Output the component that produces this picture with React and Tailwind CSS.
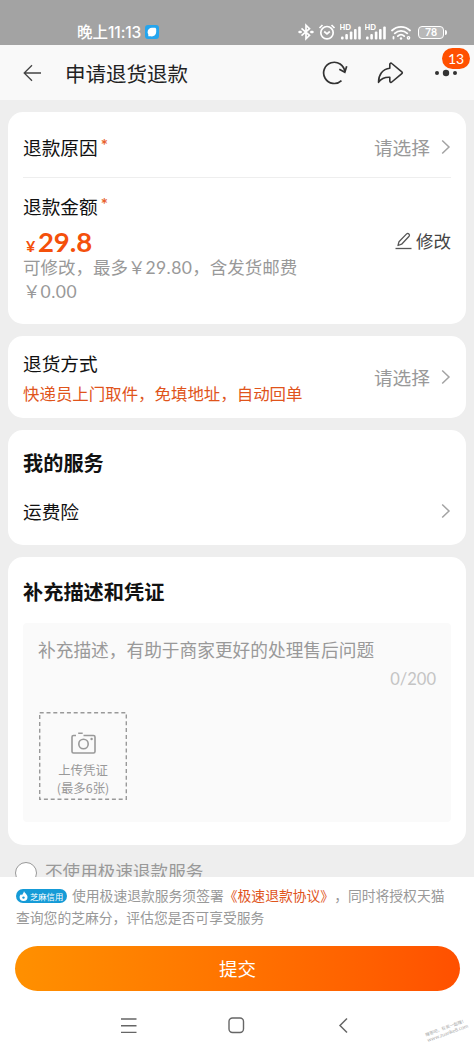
const Chevron = () => (
  <svg width="10" height="16" viewBox="0 0 10 16" fill="none" stroke="#a3a3a3" strokeWidth="1.5">
    <path d="M1.2 1.5 8 8l-6.8 6.5" />
  </svg>
)

const Signal = () => (
  <div className="flex h-[17px] w-[22px]">
    <svg width="22" height="17" viewBox="0 0 22 17" fill="#fff">
      <text x="-0.5" y="6" fontSize="7.5" fontWeight="900" fontFamily="Lato, sans-serif">HD</text>
      <rect x="1" y="12.5" width="2.6" height="3" rx="1" />
      <rect x="5.3" y="10" width="2.6" height="5.5" rx="1" />
      <rect x="9.8" y="7.5" width="2.6" height="8" rx="1" />
      <rect x="14" y="5" width="2.6" height="10.5" rx="1" />
      <rect x="18.2" y="2.5" width="2.6" height="13" rx="1" />
    </svg>
  </div>
)

const StatusBar = () => (
  <div className="flex h-[45px] items-start justify-between bg-[#a3a3a3] pl-[77px] pr-[27px] pt-[23px] text-white">
    <div className="flex h-[18px] items-center gap-[4px]">
      <span className="text-[15.5px] leading-[18px] font-medium">晚上<span className="font-['Inter'] tracking-[-0.1px]">11:13</span></span>
      <svg width="14" height="14" viewBox="0 0 14 14">
        <rect width="14" height="14" rx="3" fill="#25a5ee" />
        <path d="M2.6 7.2C2.6 4.500 4.600 2.800 7 2.800h2.600c1 0 1.600.6 1.600 1.500V7c0 2.600-2 4.400-4.300 4.400-.9 0-1.400-.2-2-.2-.8 0-1.300.2-1.500 0-.3-.3 0-.9-.1-1.600-.1-.8-.7-1.300-.7-2.400Z" fill="#fff" />
      </svg>
    </div>
    <div className="flex h-[18px] items-center">
      <svg width="16" height="18" viewBox="0 0 16 18" fill="none" stroke="#fff" strokeWidth="1.7">
        <path d="m3.500 5.300 8 7L8 15.800V2.200l3.500 3.500-8 7" />
        <path d="M1.500 9h1.200M13.300 9h1.200" strokeWidth="2.4" strokeLinecap="round" />
      </svg>
      <svg className="ml-[4px]" width="18" height="18" viewBox="0 0 18 18" fill="none" stroke="#fff" strokeWidth="1.7">
        <circle cx="9" cy="9.7" r="6.2" />
        <path d="M6.200 8.500 9 10.800l2.800-2.300M1.500 5l3-3M16.500 5l-3-3" />
      </svg>
      <div className="ml-[4px]"><Signal /></div>
      <div className="ml-[3px]"><Signal /></div>
      <svg className="ml-[4px]" width="20" height="17" viewBox="0 0 20 17" fill="none" stroke="#fff" strokeWidth="1.8" strokeLinecap="round">
        <path d="M1 6.500a13 13 0 0 1 18 0M3.800 9.400a9 9 0 0 1 12.400 0M6.800 12.100a4.800 4.800 0 0 1 6.400 0" />
        <circle cx="10" cy="14.5" r="1.2" fill="#fff" stroke="none" />
        <path d="M2.500 13v1.500" />
        <circle cx="17.5" cy="13.8" r="1.2" strokeWidth="1.3" />
      </svg>
      <div className="ml-[7px] flex h-[13px] w-[26px] items-center justify-center rounded-[4px] border border-white bg-[#b8b8b8] font-['Lato'] text-[10.5px] leading-none font-bold">78</div>
      <span className="ml-[1px] h-[5px] w-[2px] rounded-r bg-white" />
    </div>
  </div>
)

const Header = () => (
  <div className="flex h-[55px] items-center bg-[#f9f9f9] pl-[23px] text-[#222]">
    <svg width="19" height="18" viewBox="0 0 19 18" fill="none" stroke="#444" strokeWidth="1.3">
      <path d="M18 9H1.500M9 1.200 1.200 9 9 16.800" />
    </svg>
    <h1 className="ml-[23px] text-[20.5px] leading-[28px]">申请退货退款</h1>
    <div className="relative ml-auto mr-[16px] flex items-center">
      <svg width="26" height="26" viewBox="0 0 26 26" fill="none" stroke="#333" strokeWidth="1.7">
        <path d="M19.500 20.600a10.600 10.600 0 1 1 3.300-8.600" />
        <path d="m17.300 9.300 5.500 2.900 1.900-5.900" />
      </svg>
      <svg className="ml-[29px]" width="27" height="24" viewBox="0 0 27 24" fill="none" stroke="#333" strokeWidth="1.6" strokeLinejoin="round">
        <path d="M12.800 7.300V3.400c0-1.200 1.200-1.600 2-.9l10 8.300c.7.600.7 1.200 0 1.800l-10 8.400c-.8.700-2 .2-2-.9v-3.800c-5-.2-8.800 1.400-11.300 5C1.500 14 5.500 8 12.800 7.300Z" />
      </svg>
      <svg className="ml-[30px]" width="24" height="8" viewBox="0 0 24 8" fill="#333">
        <circle cx="3" cy="4" r="2" />
        <circle cx="12" cy="4" r="3.2" />
        <circle cx="21" cy="4" r="2" />
      </svg>
      <span className="absolute right-[-12px] top-[-12px] flex h-[21px] w-[28px] items-center justify-center rounded-full bg-[#ff5000] font-['Lato'] text-[14px] text-white">13</span>
    </div>
  </div>
)

const Card = ({ className, children }) => (
  <section className={`mx-[8px] rounded-[15px] bg-white px-[15px] ${className}`}>{children}</section>
)

const Label = ({ children }) => (
  <span className="flex text-[18.7px] leading-[26px] text-[#111]">{children}</span>
)

const Required = () => (
  <span className="ml-[3px] font-['Lato'] text-[17px] leading-[23px] font-bold text-[#e8602a]">*</span>
)

const Select = () => (
  <div className="flex items-center gap-[11px] text-[18.7px] leading-[26px] text-[#999]">
    请选择
    <Chevron />
  </div>
)

const RefundCard = () => (
  <Card className="h-[212px]">
    <div className="flex h-[66px] items-center justify-between border-b border-[#eee] pt-[5px]">
      <Label>退款原因<Required /></Label>
      <Select />
    </div>
    <div className="flex items-start justify-between">
      <div className="pt-[15px]">
        <Label>退款金额<Required /></Label>
        <div className="flex h-[36px] items-baseline pl-[3px] font-['Lato'] font-bold text-[#f4500b]">
          <span className="w-[12px] text-[16px]">¥</span>
          <span className="text-[27.5px] leading-[46px] tracking-[-0.1px]">29.8</span>
        </div>
        <p className="whitespace-nowrap text-[17.5px] leading-[23px] text-[#999]">
          可修改，最多￥<span className="font-['Lato'] tracking-[0.4px]">29.80</span>，含发货邮费
          <br />
          ￥<span className="font-['Lato'] tracking-[0.5px]">0.00</span>
        </p>
      </div>
      <div className="mt-[50px] flex items-center gap-[4px] text-[17.5px] leading-[26px] whitespace-nowrap text-[#444]">
        <svg width="17" height="18" viewBox="0 0 17 18" fill="none" stroke="#555" strokeWidth="1.3" strokeLinejoin="round">
          <path d="M3 13.500 4 9.700l7.600-7.800c1.600-1.300 3.700.7 2.500 2.300l-7.500 8L3 13.500Z" />
          <path d="M.5 16.500h16" />
        </svg>
        修改
      </div>
    </div>
  </Card>
)

const ReturnCard = () => (
  <Card className="mt-[12px] flex h-[82px] items-center justify-between">
    <div className="flex flex-col">
      <Label>退货方式</Label>
      <span className="mt-[5px] text-[16.45px] leading-[24px] whitespace-nowrap text-[#e0541b]">快递员上门取件，免填地址，自动回单</span>
    </div>
    <Select />
  </Card>
)

const ServiceCard = () => (
  <Card className="mt-[12px] h-[115px] pt-[19px]">
    <h2 className="text-[20.2px] leading-[28px] font-bold text-[#111]">我的服务</h2>
    <div className="mt-[21px] flex items-center justify-between">
      <Label>运费险</Label>
      <Chevron />
    </div>
  </Card>
)

const EvidenceCard = () => (
  <Card className="mt-[12px] h-[288px] pt-[21px]">
    <h2 className="text-[20.2px] leading-[28px] font-bold text-[#111]">补充描述和凭证</h2>
    <div className="mt-[17px] h-[199px] rounded-[4px] bg-[#fafafa] px-[15px] pt-[14px] text-[#999]">
      <p className="text-[17.7px] leading-[24px] whitespace-nowrap">补充描述，有助于商家更好的处理售后问题</p>
      <p className="mt-[6px] text-right font-['Lato'] text-[16.5px] leading-[24px] text-[#c4c4c4]">0/200</p>
      <div className="relative mt-[21px] ml-[1px] flex h-[88px] w-[88px] flex-col items-center pt-[20px] text-[12.4px] leading-[17px]">
        <svg className="absolute inset-0" width="88" height="88" viewBox="0 0 88 88" fill="none" stroke="#999" strokeWidth="1.4" strokeDasharray="4 2.8">
          <rect x=".7" y=".7" width="86.6" height="86.6" />
        </svg>
        <svg className="mb-[8px] shrink-0" width="25" height="22" viewBox="0 0 25 22" fill="none" stroke="#999" strokeWidth="1.6">
          <path d="M5 3.500H2.500A1.500 1.500 0 0 0 1 5v14.500A1.500 1.500 0 0 0 2.500 21h20a1.500 1.500 0 0 0 1.500-1.500V5a1.500 1.500 0 0 0-1.500-1.500H12.500M7.200 1.200h4.500" />
          <circle cx="12.5" cy="12" r="4.7" />
          <circle cx="20.6" cy="7" r="1.2" fill="#999" stroke="none" />
        </svg>
        <span>上传凭证</span>
        <span className="mt-[1px]">(最多6张)</span>
      </div>
    </div>
  </Card>
)

const Footer = () => (
  <footer className="h-[176px] bg-white">
    <div className="h-[69px] px-[16px] pt-[8px] text-[13.8px] leading-[21.5px] whitespace-nowrap text-[#999]">
      <div className="flex items-center">
        <span className="mr-[5px] flex h-[14px] w-[51px] shrink-0 items-center gap-[2px] rounded-full bg-[#159bd7] pl-[3px] text-[8.3px] leading-none text-white">
          <svg className="shrink-0" width="9" height="10" viewBox="0 0 9 10">
            <path d="M5 0c.4 2 3.500 3.200 3.500 6A3.900 3.900 0 0 1 .6 6c0-1.200.7-2.200 1.500-2.800l.8 1C3.800 3 4.800 1.800 5 0Z" fill="#fff" />
            <circle cx="4.5" cy="6.6" r="1.2" fill="#159bd7" />
          </svg>
          芝麻信用
        </span>
        使用极速退款服务须签署<span className="text-[#e0541b]">《极速退款协议》</span>，同时将授权天猫
      </div>
      <div>查询您的芝麻分，评估您是否可享受服务</div>
    </div>
    <button className="ml-[15px] flex h-[45px] w-[445px] items-center justify-center rounded-full bg-linear-to-r from-[#ff9000] to-[#ff5000] text-[18.5px] text-white">提交</button>
    <div className="relative flex h-[62px] items-start pl-[120px] pt-[26px]">
      <svg width="17" height="17" viewBox="0 0 17 17" fill="none" stroke="#666" strokeWidth="1.4">
        <path d="M1 2h15.500M1 8.700h15.500M1 15.400h15.500" />
      </svg>
      <svg className="ml-[91px]" width="17" height="17" viewBox="0 0 17 17" fill="none" stroke="#666" strokeWidth="1.4">
        <rect x="1" y="1" width="14.5" height="14.5" rx="3.5" />
      </svg>
      <svg className="ml-[93px]" width="10" height="17" viewBox="0 0 10 17" fill="none" stroke="#666" strokeWidth="1.5">
        <path d="M9 1.500 2 8.500l7 7" />
      </svg>
      <div className="absolute right-[6px] top-[33px] -rotate-[20deg] text-[4.3px] leading-[6px] whitespace-nowrap text-[#aaa]">
        <div>赚客吧，有奖一起赚！</div>
        <div className="font-['Lato'] text-[5.2px]">www.zuanke8.com</div>
      </div>
    </div>
  </footer>
)

const App = () => {
  return (
    <div className="flex h-[1053px] w-[474px] flex-col overflow-hidden bg-[#eee] font-['Noto_Sans_CJK_SC',sans-serif]">
      <StatusBar />
      <Header />
      <main className="h-[777px] overflow-hidden pt-[12px]">
        <RefundCard />
        <ReturnCard />
        <ServiceCard />
        <EvidenceCard />
        <div className="mt-[13px] flex items-center gap-[8px] pl-[15px] text-[17.6px] leading-[26px] text-[#999]">
          <span className="mt-[3px] size-[22px] rounded-full border border-[#999] bg-white" />
          不使用极速退款服务
        </div>
      </main>
      <Footer />
    </div>
  )
}

export default App
